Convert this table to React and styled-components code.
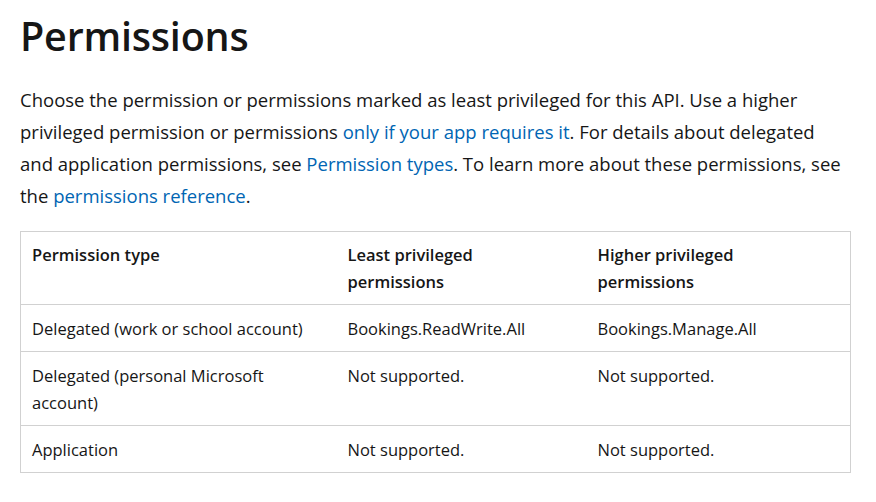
import React from "react";
import styled, { createGlobalStyle } from "styled-components";

const GlobalStyle = createGlobalStyle`
  body {
    margin: 0;
    background: #fff;
    font-family: "Open Sans", "Noto Sans", sans-serif;
    color: #161616;
  }
`;

const Page = styled.main`
  padding: 8px 26px 0 20px;
`;

const Title = styled.h1`
  font-size: 39.5px;
  font-weight: 600;
  line-height: 56px;
  margin: 0 0 20px;
  letter-spacing: -0.2px;
`;

const Intro = styled.p`
  font-size: 18.5px;
  line-height: 32px;
  margin: 0 0 19px;
  max-width: 830px;
`;

const Link = styled.a`
  color: #0065b3;
  text-decoration: none;
`;

const Table = styled.table`
  width: 831px;
  border-collapse: collapse;
  border: 1px solid #d1d1d1;
  font-size: 16.5px;
  line-height: 27px;
  table-layout: fixed;
`;

const Cell = styled.td`
  box-sizing: border-box;
  padding: 10px 11px 9px;
  vertical-align: top;
  text-align: left;
  border-top: 1px solid #d1d1d1;
  width: ${(p) => p.$w || "auto"};
`;

const HeadCell = styled(Cell).attrs({ as: "th" })`
  font-weight: 600;
  border-top: none;
  padding: 9px 36px 9px 11px;
`;

const rows = [
  ["Delegated (work or school account)", "Bookings.ReadWrite.All", "Bookings.Manage.All"],
  ["Delegated (personal Microsoft account)", "Not supported.", "Not supported."],
  ["Application", "Not supported.", "Not supported."],
];

const App = () => {
  return (
    <Page>
      <GlobalStyle />
      <Title>Permissions</Title>
      <Intro>
        Choose the permission or permissions marked as least privileged for this API. Use a higher
        privileged permission or permissions <Link href="#">only if your app requires it</Link>. For
        details about delegated and application permissions, see{" "}
        <Link href="#">Permission types</Link>. To learn more about these permissions, see the{" "}
        <Link href="#">permissions reference</Link>.
      </Intro>
      <Table>
        <thead>
          <tr>
            <HeadCell $w="316px">Permission type</HeadCell>
            <HeadCell $w="250px">Least privileged permissions</HeadCell>
            <HeadCell>Higher privileged permissions</HeadCell>
          </tr>
        </thead>
        <tbody>
          {rows.map((r) => (
            <tr key={r[0]}>
              {r.map((c, i) => (
                <Cell key={i}>{c}</Cell>
              ))}
            </tr>
          ))}
        </tbody>
      </Table>
    </Page>
  );
};

export default App;
